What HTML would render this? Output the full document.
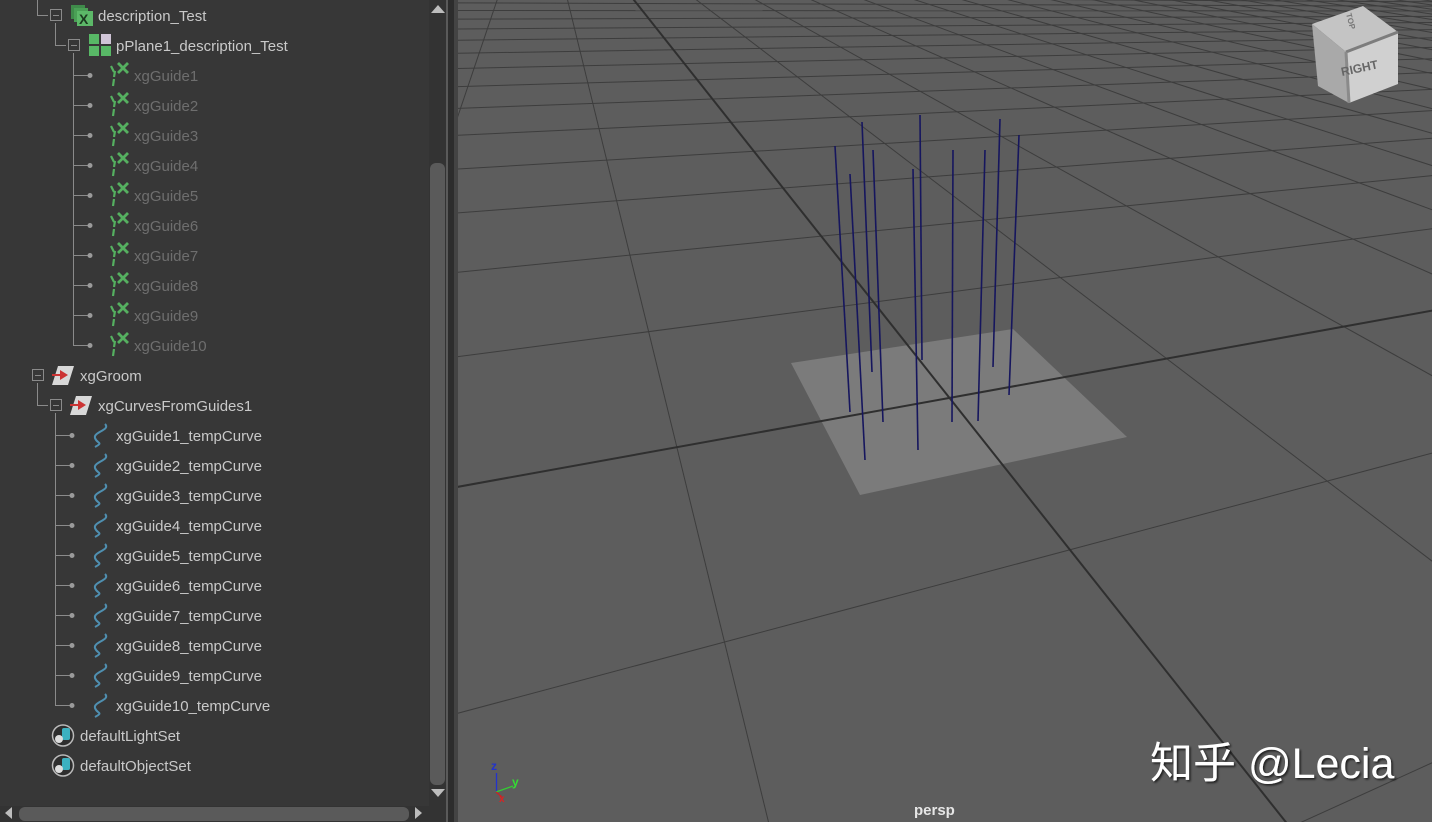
<!DOCTYPE html>
<html><head><meta charset="utf-8"><style>
html,body{margin:0;padding:0;width:1432px;height:822px;overflow:hidden;background:#373737;font-family:"Liberation Sans","Noto Sans CJK SC",sans-serif}
#out{position:absolute;left:0;top:0;width:446px;height:822px;background:#373737;overflow:hidden}
.row{position:absolute;height:30px;line-height:30px;font-size:15px;color:#c9c9c9;white-space:nowrap;margin-top:2px}
.g{color:#6e6e6e}
#vp{position:absolute;left:458px;top:0;width:974px;height:822px;background:#5d5d5d;overflow:hidden}
</style></head><body>
<div id="out">
<svg width="446" height="822" style="position:absolute;left:0;top:0">
<g stroke="#8a8a8a" stroke-width="1" fill="none">
 <path d="M37.5 0V15.5H48"/>
 <path d="M55.5 23V45.5H66"/>
 <path d="M73.5 53V345.5H90"/>
 <path d="M73.5 75.5H90M73.5 105.5H90M73.5 135.5H90M73.5 165.5H90M73.5 195.5H90M73.5 225.5H90M73.5 255.5H90M73.5 285.5H90M73.5 315.5H90"/>
 <path d="M37.5 383V405.5H48"/>
 <path d="M55.5 413V705.5H72"/>
 <path d="M55.5 435.5H72M55.5 465.5H72M55.5 495.5H72M55.5 525.5H72M55.5 555.5H72M55.5 585.5H72M55.5 615.5H72M55.5 645.5H72M55.5 675.5H72"/>
 <rect x="50.5" y="9.5" width="11" height="11"/><path d="M53 15.5h6"/>
 <rect x="68.5" y="39.5" width="11" height="11"/><path d="M71 45.5h6"/>
 <rect x="32.5" y="369.5" width="11" height="11"/><path d="M35 375.5h6"/>
 <rect x="50.5" y="399.5" width="11" height="11"/><path d="M53 405.5h6"/>
</g>
<g fill="#9a9a9a">
 <circle cx="90" cy="75.5" r="2.5"/><circle cx="90" cy="105.5" r="2.5"/><circle cx="90" cy="135.5" r="2.5"/><circle cx="90" cy="165.5" r="2.5"/><circle cx="90" cy="195.5" r="2.5"/><circle cx="90" cy="225.5" r="2.5"/><circle cx="90" cy="255.5" r="2.5"/><circle cx="90" cy="285.5" r="2.5"/><circle cx="90" cy="315.5" r="2.5"/><circle cx="90" cy="345.5" r="2.5"/>
 <circle cx="72" cy="435.5" r="2.5"/><circle cx="72" cy="465.5" r="2.5"/><circle cx="72" cy="495.5" r="2.5"/><circle cx="72" cy="525.5" r="2.5"/><circle cx="72" cy="555.5" r="2.5"/><circle cx="72" cy="585.5" r="2.5"/><circle cx="72" cy="615.5" r="2.5"/><circle cx="72" cy="645.5" r="2.5"/><circle cx="72" cy="675.5" r="2.5"/><circle cx="72" cy="705.5" r="2.5"/>
</g>
<g>
 <rect x="71" y="5" width="14" height="14" fill="#3f8a4a"/>
 <rect x="74" y="8" width="14" height="14" fill="#4a9f55"/>
 <rect x="77" y="11" width="16" height="15" fill="#5cb868"/>
 <text x="79" y="24" font-size="14" font-weight="bold" fill="#1c3a20" font-family="Liberation Sans">X</text>
</g>
<g><rect x="89" y="34" width="10" height="10" fill="#58b866"/><rect x="101" y="34" width="10" height="10" fill="#cfc4d6"/><rect x="89" y="46" width="10" height="10" fill="#58b866"/><rect x="101" y="46" width="10" height="10" fill="#58b866"/></g>
<g id="gi" fill="none" stroke="#55b060" stroke-width="2.2"></g>
<g>
 <path d="M58 366h16l-6 19h-16z" fill="#d8d8d8"/><path d="M52 375h10" stroke="#c33" stroke-width="2"/><path d="M60 370l8 5-8 5z" fill="#c33"/>
 <path d="M76 396h16l-6 19h-16z" fill="#d8d8d8"/><path d="M70 405h10" stroke="#c33" stroke-width="2"/><path d="M78 400l8 5-8 5z" fill="#c33"/>
</g>
<g id="ci" fill="none" stroke="#4f8fb0" stroke-width="2"></g>
<g>
 <circle cx="63" cy="735.5" r="10.5" fill="#2e2e2e" stroke="#bbb" stroke-width="1.5"/><rect x="62" y="728" width="8" height="12" rx="2" fill="#3cb1c0"/><circle cx="59" cy="739" r="4" fill="#ddd"/>
 <circle cx="63" cy="765.5" r="10.5" fill="#2e2e2e" stroke="#bbb" stroke-width="1.5"/><rect x="62" y="758" width="8" height="12" rx="2" fill="#3cb1c0"/><circle cx="59" cy="769" r="4" fill="#ddd"/>
</g>
<rect x="429" y="0" width="17" height="806" fill="#333"/>
<path d="M431 13l7-8 7 8z" fill="#bdbdbd"/>
<rect x="430" y="163" width="15" height="622" rx="6" fill="#5a5a5a"/>
<path d="M431 789l7 8 7-8z" fill="#bdbdbd"/>
<rect x="0" y="806" width="446" height="16" fill="#333"/>
<path d="M12 807l-7 6 7 6z" fill="#bdbdbd"/>
<rect x="19" y="807" width="390" height="14" rx="6" fill="#5a5a5a"/>
<path d="M415 807l7 6-7 6z" fill="#bdbdbd"/>
</svg>
<div class="row" style="left:98px;top:0">description_Test</div>
<div class="row" style="left:116px;top:30px">pPlane1_description_Test</div>
<div class="row g" style="left:134px;top:60px">xgGuide1</div>
<div class="row g" style="left:134px;top:90px">xgGuide2</div>
<div class="row g" style="left:134px;top:120px">xgGuide3</div>
<div class="row g" style="left:134px;top:150px">xgGuide4</div>
<div class="row g" style="left:134px;top:180px">xgGuide5</div>
<div class="row g" style="left:134px;top:210px">xgGuide6</div>
<div class="row g" style="left:134px;top:240px">xgGuide7</div>
<div class="row g" style="left:134px;top:270px">xgGuide8</div>
<div class="row g" style="left:134px;top:300px">xgGuide9</div>
<div class="row g" style="left:134px;top:330px">xgGuide10</div>
<div class="row" style="left:80px;top:360px">xgGroom</div>
<div class="row" style="left:98px;top:390px">xgCurvesFromGuides1</div>
<div class="row" style="left:116px;top:420px">xgGuide1_tempCurve</div>
<div class="row" style="left:116px;top:450px">xgGuide2_tempCurve</div>
<div class="row" style="left:116px;top:480px">xgGuide3_tempCurve</div>
<div class="row" style="left:116px;top:510px">xgGuide4_tempCurve</div>
<div class="row" style="left:116px;top:540px">xgGuide5_tempCurve</div>
<div class="row" style="left:116px;top:570px">xgGuide6_tempCurve</div>
<div class="row" style="left:116px;top:600px">xgGuide7_tempCurve</div>
<div class="row" style="left:116px;top:630px">xgGuide8_tempCurve</div>
<div class="row" style="left:116px;top:660px">xgGuide9_tempCurve</div>
<div class="row" style="left:116px;top:690px">xgGuide10_tempCurve</div>
<div class="row" style="left:80px;top:720px">defaultLightSet</div>
<div class="row" style="left:80px;top:750px">defaultObjectSet</div>
</div>
<div style="position:absolute;left:446px;top:0;width:2px;height:822px;background:#5a5a5a"></div>
<div style="position:absolute;left:448px;top:0;width:6px;height:822px;background:#2d2d2d"></div>
<div style="position:absolute;left:454px;top:0;width:4px;height:822px;background:#444"></div>
<div id="vp">
<svg id="vs" width="974" height="822" style="position:absolute;left:0;top:0">
<defs><filter id="sh"><feDropShadow dx="1.5" dy="1.5" stdDeviation="1" flood-color="#000" flood-opacity="0.7"/></filter></defs>
<g id="grid"></g>
<polygon points="333,363 555,329 669,437 402,495" fill="#7b7b7b"/>
<g id="axes"></g>
<g stroke="#16165e" stroke-width="1.6">
<line x1="377" y1="146" x2="392" y2="412"/>
<line x1="392" y1="174" x2="407" y2="460"/>
<line x1="404" y1="122" x2="414" y2="372"/>
<line x1="415" y1="150" x2="425" y2="422"/>
<line x1="455" y1="169" x2="460" y2="450"/>
<line x1="462" y1="115" x2="464" y2="360"/>
<line x1="495" y1="150" x2="494" y2="422"/>
<line x1="527" y1="150" x2="520" y2="421"/>
<line x1="542" y1="119" x2="535" y2="367"/>
<line x1="561" y1="135" x2="551" y2="395"/>
</g>
<g>
<polygon points="854,24 905,6 940,32 888,52" fill="#c4c4c4"/>
<polygon points="854,24 888,52 891,103 860,86" fill="#a9a9a9"/>
<polygon points="888,52 940,32 940,84 891,103" fill="#d0d0d0"/>
<path d="M888 52L940 32" stroke="#7d7d7d" stroke-width="3"/>
<path d="M888 52L891 103" stroke="#8a8a8a" stroke-width="3"/>
<text x="0" y="0" font-size="12" font-weight="bold" fill="#666" transform="translate(884,76) rotate(-12)">RIGHT</text>
<text x="0" y="0" font-size="8" font-weight="bold" fill="#777" transform="translate(888,14) rotate(75)">TOP</text>
</g>
<g font-size="12" font-weight="bold" font-family="Liberation Sans">
<line x1="38.5" y1="773" x2="38.5" y2="792" stroke="#2233cc" stroke-width="1.3"/>
<line x1="38" y1="792" x2="55" y2="786" stroke="#33cc33" stroke-width="1.3"/>
<line x1="38" y1="792" x2="44" y2="797" stroke="#cc2222" stroke-width="1.3"/>
<text x="33" y="770" fill="#2233cc">z</text>
<text x="54" y="786" fill="#33dd33">y</text>
<text x="41" y="802" fill="#dd2222" font-size="10">x</text>
</g>
<text x="456" y="815" font-size="15" font-weight="bold" fill="#e6e6e6">persp</text>
<text x="692" y="778" font-size="43" fill="#ffffff" filter="url(#sh)" font-family="Liberation Sans, Noto Sans CJK SC, sans-serif">知乎 @Lecia</text>
</svg>
</div>
<script>
(function(){
var NS="http://www.w3.org/2000/svg";
var gi=document.getElementById('gi');
for(var i=0;i<10;i++){var y=75+i*30;
 var p=document.createElementNS(NS,'path');
 p.setAttribute('d','M111 '+(y-9)+'l3 6M115 '+(y-4)+'l-1 6M114 '+(y+4)+'l-1 7');gi.appendChild(p);
 var q=document.createElementNS(NS,'path');
 q.setAttribute('d','M118 '+(y-12)+'l10 10M128 '+(y-12)+'l-10 10');q.setAttribute('stroke-width','2.8');gi.appendChild(q);}
var ci=document.getElementById('ci');
for(var i=0;i<10;i++){var y=435+i*30;
 var p=document.createElementNS(NS,'path');
 p.setAttribute('d','M105 '+(y-11)+'C111 '+(y-5)+' 93 '+(y-3)+' 95 '+(y+3)+'S104 '+(y+7)+' 95 '+(y+12));ci.appendChild(p);}
var src=[[-.5,-.5],[.5,-.5],[.5,.5],[-.5,.5]];
var dst=[[333,363],[555,329],[669,437],[402,495]];
var A=[],b=[];
for(var k=0;k<4;k++){var u=src[k][0],v=src[k][1],x=dst[k][0],y=dst[k][1];
 A.push([u,v,1,0,0,0,-u*x,-v*x]);b.push(x);
 A.push([0,0,0,u,v,1,-u*y,-v*y]);b.push(y);}
var n=8;for(var c=0;c<n;c++){var m=c;for(var r=c+1;r<n;r++)if(Math.abs(A[r][c])>Math.abs(A[m][c]))m=r;
 var t=A[c];A[c]=A[m];A[m]=t;t=b[c];b[c]=b[m];b[m]=t;
 for(var r=0;r<n;r++)if(r!=c){var f=A[r][c]/A[c][c];for(var j=c;j<n;j++)A[r][j]-=f*A[c][j];b[r]-=f*b[c];}}
var h=[];for(var c=0;c<n;c++)h.push(b[c]/A[c][c]);
function P(u,v){var w=h[6]*u+h[7]*v+1;return [(h[0]*u+h[1]*v+h[2])/w,(h[3]*u+h[4]*v+h[5])/w,w];}
var grid=document.getElementById('grid'),axes=document.getElementById('axes');
var R=40;
function W(fixedU,val,t){return fixedU?(h[6]*val+h[7]*t+1):(h[6]*t+h[7]*val+1);}
function seg(fixedU,val,g,col,wd){
 var lo=-R,hi=R,eps=0.03;
 var w0=W(fixedU,val,lo),w1=W(fixedU,val,hi);
 if(w0<eps&&w1<eps)return;
 var slope=(w1-w0)/(hi-lo);
 var ts=(slope!==0)?lo+(eps-w0)/slope:0;
 if(w0<eps)lo=ts;
 if(w1<eps)hi=ts;
 var a=fixedU?P(val,lo):P(lo,val),c=fixedU?P(val,hi):P(hi,val);
 var l=document.createElementNS(NS,'line');
 l.setAttribute('x1',a[0]);l.setAttribute('y1',a[1]);l.setAttribute('x2',c[0]);l.setAttribute('y2',c[1]);
 l.setAttribute('stroke',col);l.setAttribute('stroke-width',wd);g.appendChild(l);}
for(var i=-R;i<=R;i++){if(i==0)continue;seg(true,i,grid,'#3d3d3d',1);seg(false,i,grid,'#3d3d3d',1);}
seg(true,0,axes,'#2f2f2f',2);seg(false,0,axes,'#2f2f2f',2);
})();
</script>
</body></html>
